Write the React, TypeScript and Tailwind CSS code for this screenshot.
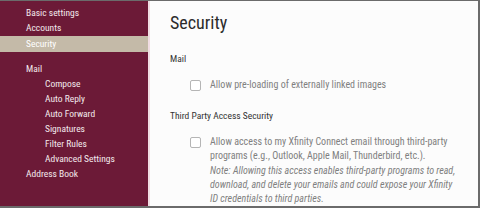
import React from 'react';

const subItems = ['Compose', 'Auto Reply', 'Auto Forward', 'Signatures', 'Filter Rules', 'Advanced Settings'];

const Checkbox: React.FC = () => (
  <span className="mt-[2px] block h-[11px] w-[11px] shrink-0 rounded-[2px] border border-[#b5b5b5] bg-white" />
);

const App: React.FC = () => {
  return (
    <div
      className="flex h-[208px] w-[480px] overflow-hidden border-t border-r-2 border-b-2 border-[#6b6b6b] bg-white"
      style={{ fontFamily: '"Roboto Condensed", Roboto, sans-serif' }}
    >
      <aside className="w-[148px] shrink-0 bg-[#6c1a37] pt-[5px] text-[9.5px] text-[#f3e9ec]">
        <div className="flex h-[15px] items-center pl-[26px]">Basic settings</div>
        <div className="flex h-[15px] items-center pl-[26px]">Accounts</div>
        <div className="flex h-[16px] items-center bg-[#c4baa8] pl-[26px] text-white">Security</div>
        <div className="mt-[10px] flex h-[15px] items-center pl-[26px]">Mail</div>
        {subItems.map((item) => (
          <div key={item} className="flex h-[15px] items-center pl-[45px]">
            {item}
          </div>
        ))}
        <div className="flex h-[15px] items-center pl-[26px]">Address Book</div>
      </aside>
      <div className="w-[2px] shrink-0 bg-[#f1dde3]" />
      <main className="flex-1 bg-[#fcfcfc] pl-[20px] pr-[10px] text-[#333]">
        <h1 className="mt-[9px] text-[18px] leading-[26px] text-[#2b2b2b]">Security</h1>
        <div className="mt-[17px] text-[9.5px] leading-[12px]">Mail</div>
        <div className="mt-[13px] flex gap-[9px] pl-[20px]">
          <Checkbox />
          <span className="text-[10px] leading-[14px] text-[#808080]">Allow pre-loading of externally linked images</span>
        </div>
        <div className="mt-[18px] text-[9.5px] leading-[12px]">Third Party Access Security</div>
        <div className="mt-[13px] flex gap-[9px] pl-[20px]">
          <Checkbox />
          <p className="whitespace-nowrap text-[10px] leading-[14.3px] text-[#808080]">
            Allow access to my Xfinity Connect email through third-party
            <br />
            programs (e.g., Outlook, Apple Mail, Thunderbird, etc.).
            <br />
            <i>
              Note: Allowing this access enables third-party programs to read,
              <br />
              download, and delete your emails and could expose your Xfinity
              <br />
              ID credentials to third parties.
            </i>
          </p>
        </div>
      </main>
    </div>
  );
};

export default App;
